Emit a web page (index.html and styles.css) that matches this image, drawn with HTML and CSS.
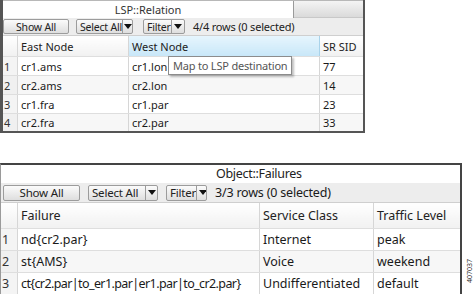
FILE: index.html
```html
<!DOCTYPE html>
<html lang="en">
<head>
    <meta charset="UTF-8">
    <title>LSP Relation and Failures</title>
    <link rel="stylesheet" href="styles.css">
</head>
<body>
    <div class="panel lsp">
        <div class="tabs">
            <div class="tab active">LSP::Relation</div>
            <div class="tab blank"></div>
        </div>
        <div class="toolbar">
            <span class="btn show">Show All</span>
            <span class="btn drop sel">Select All<i class="arrow"></i></span>
            <span class="btn drop filt">Filter<i class="arrow"></i></span>
            <span class="count">4/4 rows (0 selected)</span>
        </div>
        <table class="grid">
            <tr class="head">
                <th class="num"></th>
                <th class="c-east">East Node</th>
                <th class="c-west hot">West Node</th>
                <th class="c-sid">SR SID</th>
            </tr>
            <tr><td class="num">1</td><td>cr1.ams</td><td>cr1.lon</td><td>77</td></tr>
            <tr><td class="num">2</td><td>cr2.ams</td><td>cr2.lon</td><td>14</td></tr>
            <tr><td class="num">3</td><td>cr1.fra</td><td>cr1.par</td><td>23</td></tr>
            <tr><td class="num">4</td><td>cr2.fra</td><td>cr2.par</td><td>33</td></tr>
        </table>
        <div class="tooltip">Map to LSP destination</div>
    </div>

    <div class="panel fail">
        <div class="title">Object::Failures</div>
        <div class="toolbar">
            <span class="btn show">Show All</span>
            <span class="btn drop sel">Select All<i class="arrow"></i></span>
            <span class="btn drop filt">Filter<i class="arrow"></i></span>
            <span class="count">3/3 rows (0 selected)</span>
        </div>
        <table class="grid">
            <tr class="head">
                <th class="num"></th>
                <th class="c-fail">Failure</th>
                <th class="c-class">Service Class</th>
                <th class="c-level">Traffic Level</th>
            </tr>
            <tr><td class="num">1</td><td>nd{cr2.par}</td><td>Internet</td><td>peak</td></tr>
            <tr><td class="num">2</td><td>st{AMS}</td><td>Voice</td><td>weekend</td></tr>
            <tr><td class="num">3</td><td class="long">ct{cr2.par|to_er1.par|er1.par|to_cr2.par}</td><td>Undifferentiated</td><td>default</td></tr>
        </table>
    </div>

    <div class="figno">407037</div>
</body>
</html>
```

FILE: styles.css
```css
body {
    margin: 0;
    background: #ffffff;
    color: #1a1a1a;
    font-family: "Noto Sans", "Open Sans", sans-serif;
    width: 474px;
    height: 294px;
    overflow: hidden;
    position: relative;
}

.panel {
    position: relative;
    box-sizing: border-box;
}

/* top panel */
.lsp {
    width: 365px;
    border-left: 3px solid #555555;
    border-right: 2px solid #555555;
    border-bottom: 2px solid #555555;
    font-size: 11px;
}

.tabs {
    display: flex;
    height: 18px;
    border-top: 1px solid #b8b8b8;
    box-sizing: border-box;
}

.tab.active {
    width: 290px;
    text-align: center;
    line-height: 17px;
    background: #ffffff;
    color: #333333;
    border-right: 1px solid #9a9a9a;
}

.tab.blank {
    flex: 1;
    background: linear-gradient(#f4f4f4, #dadada);
    border-bottom: 1px solid #c8c8c8;
}

.toolbar {
    display: flex;
    align-items: center;
    height: 17px;
    background: #ededed;
    border-bottom: 1px solid #cfcfcf;
    white-space: nowrap;
}

.btn {
    display: flex;
    align-items: center;
    justify-content: center;
    box-sizing: border-box;
    height: 15px;
    border: 1px solid #9c9c9c;
    border-radius: 2px;
    background: linear-gradient(#fbfbfb, #dedede);
    color: #222222;
    white-space: nowrap;
    overflow: hidden;
    letter-spacing: -0.2px;
}

.btn.drop {
    justify-content: flex-start;
    padding-left: 3px;
}

.arrow {
    margin-left: auto;
    flex: none;
    height: 100%;
    border-left: 1px solid #9c9c9c;
    box-sizing: border-box;
    display: flex;
    align-items: center;
    justify-content: center;
}

.arrow::after {
    content: "";
    border-left: 4px solid transparent;
    border-right: 4px solid transparent;
    border-top: 5px solid #111111;
}

.lsp .btn { font-size: 10.5px; }
.lsp .show { width: 66px; }
.lsp .sel { width: 57px; margin-left: 7px; }
.lsp .sel .arrow { width: 11px; }
.lsp .filt { width: 42px; margin-left: 10px; }
.lsp .filt .arrow { width: 13px; }
.lsp .count { margin-left: 8px; color: #222222; letter-spacing: -0.2px; }

.grid {
    border-collapse: collapse;
    width: 100%;
    table-layout: fixed;
}

.grid th,
.grid td {
    text-align: left;
    font-weight: normal;
    padding: 0 0 0 3px;
    border-right: 1px solid #d6d6d6;
    border-bottom: 1px solid #dedede;
    white-space: nowrap;
    overflow: hidden;
}

.grid th:last-child,
.grid td:last-child {
    border-right: none;
}

.grid .num {
    padding-left: 1px;
    color: #333333;
    background: #f4f4f4;
}

.grid tr:nth-child(odd) td {
    background: #f7f7f7;
}

.grid tr:nth-child(odd) td.num {
    background: #f0f0f0;
}

.grid .head th {
    background: linear-gradient(#ffffff, #f1f1f1);
    color: #222222;
}

.grid .head th.hot {
    background: linear-gradient(#e6f5fd, #c8e7f8);
    border-right-color: #a9d3ea;
}

.lsp .grid .head th { height: 20px; }
.lsp .grid td { height: 18px; }
.lsp .grid .num { width: 13px; }
.lsp .c-east { width: 107px; }
.lsp .c-west { width: 187px; }
.lsp .grid tr:last-child td { border-bottom: none; height: 17px; }

.tooltip {
    position: absolute;
    left: 165px;
    top: 56px;
    padding: 0 4px;
    height: 17px;
    line-height: 17px;
    background: #ffffff;
    border: 1px solid #8c8c8c;
    color: #555555;
    letter-spacing: -0.2px;
    box-shadow: 2px 2px 2px rgba(0, 0, 0, 0.25);
}

/* bottom panel */
.fail {
    margin-top: 30px;
    width: 462px;
    border-top: 2px solid #444444;
    border-left: 1px solid #9a9a9a;
    border-right: 2px solid #444444;
    font-size: 12.5px;
}

.fail .title {
    height: 18px;
    line-height: 18px;
    padding-left: 215px;
    color: #222222;
    letter-spacing: -0.3px;
}

.fail .toolbar { height: 19px; }
.fail .btn { height: 16px; font-size: 11.5px; }
.fail .show { width: 77px; margin-left: 2px; }
.fail .sel { width: 70px; margin-left: 8px; }
.fail .sel .arrow { width: 12px; }
.fail .filt { width: 41px; margin-left: 8px; }
.fail .filt .arrow { width: 13px; }
.fail .count { margin-left: 8px; letter-spacing: -0.2px; }

.fail .grid .head th { height: 25px; }
.fail .grid td { height: 21px; }
.fail .grid .num { width: 15px; }
.fail .c-fail { width: 238px; }
.fail .c-class { width: 110px; }
.fail .grid td.long { letter-spacing: -0.6px; }

.figno {
    position: absolute;
    left: 465px;
    top: 283px;
    font-size: 7px;
    color: #333333;
    transform: rotate(-90deg);
    transform-origin: left top;
    white-space: nowrap;
}
```
